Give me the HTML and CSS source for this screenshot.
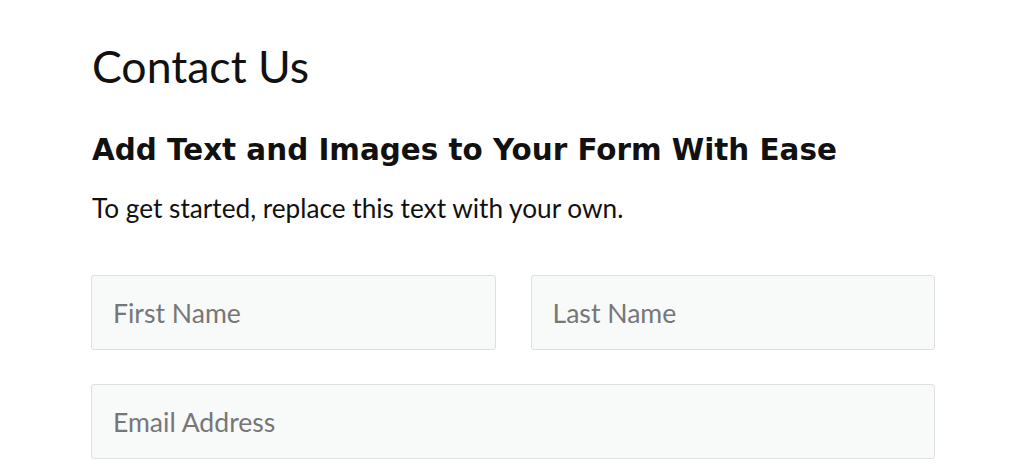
FILE: index.html
```html
<!DOCTYPE html>
<html lang="en">
<head>
<meta charset="utf-8">
<title>Contact Us</title>
<link rel="stylesheet" href="styles.css">
</head>
<body>
<main class="page">
  <h1 class="title">Contact Us</h1>
  <h2 class="subtitle">Add Text and Images to Your Form With Ease</h2>
  <p class="intro">To get started, replace this text with your own.</p>
  <form class="form">
    <div class="row two">
      <input class="field" type="text" placeholder="First Name">
      <input class="field" type="text" placeholder="Last Name">
    </div>
    <div class="row">
      <input class="field" type="email" placeholder="Email Address">
    </div>
  </form>
</main>
</body>
</html>
```

FILE: styles.css
```css
* { box-sizing: border-box; }
html, body { margin: 0; padding: 0; background: #fff; }
body { font-family: Lato, "Open Sans", sans-serif; color: #111; }
.page { width: 844px; margin-left: 91px; padding-top: 38px; }
.title { margin: 0; font-family: Lato, sans-serif; font-weight: 400; font-size: 44.6px; line-height: 56px; color: #111; padding-left: 1px; }
.subtitle { margin: 37px 0 0 1px; font-family: "DejaVu Sans", sans-serif; font-weight: 700; font-size: 29.4px; line-height: 38px; color: #111; }
.intro { margin: 22px 0 0 1px; font-size: 26.2px; line-height: 34px; color: #111; }
.form { margin-top: 50px; display: flex; flex-direction: column; gap: 34px; }
.row { display: grid; grid-template-columns: 1fr; }
.row.two { grid-template-columns: 1fr 1fr; gap: 35px; }
.field { display: block; width: 100%; height: 75px; margin: 0; padding: 0 21px; border: 1px solid #dfe0e0; border-radius: 3px; background: #f8f9f9; font-family: Lato, sans-serif; font-size: 26.6px; color: #333; outline: none; }
.field::placeholder { color: #777; opacity: 1; }
```
